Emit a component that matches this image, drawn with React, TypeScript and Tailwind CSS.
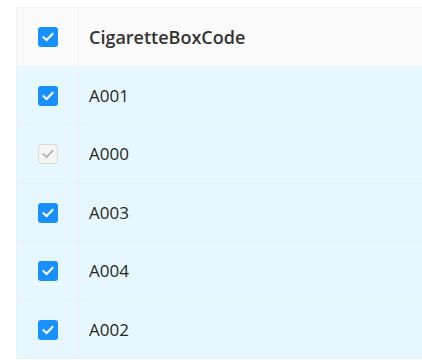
import React from "react";

const rows = [
    { code: "A001", disabled: false, h: "h-[58px]" },
    { code: "A000", disabled: true, h: "h-[59px]" },
    { code: "A003", disabled: false, h: "h-[58px]" },
    { code: "A004", disabled: false, h: "h-[59px]" },
    { code: "A002", disabled: false, h: "h-[58px]" },
];

function Checkbox({ disabled }: { disabled?: boolean }) {
    return (
        <span
            className={
                disabled
                    ? "flex h-5 w-5 items-center justify-center rounded-[3px] border border-[#d9d9d9] bg-[#f5f5f5]"
                    : "flex h-5 w-5 items-center justify-center rounded-[3px] bg-[#1890ff]"
            }
        >
            <svg width="12" height="10" viewBox="0 0 12 10" aria-hidden="true">
                <path
                    d="M1.5 5.2 L4.6 8 L10.5 2"
                    fill="none"
                    stroke={disabled ? "rgba(0,0,0,0.25)" : "#fff"}
                    strokeWidth="2"
                    strokeLinecap="square"
                />
            </svg>
        </span>
    );
}

export default function App() {
    return (
        <div className="min-h-[360px] bg-white pl-4 pt-[7px] font-['Open_Sans',sans-serif] text-[17px] text-[#262626]">
            {/* Table */}
            <div className="border-l border-t border-[#f0f0f0]">
                {/* Header */}
                <div className="flex h-[59px] border-b border-[#f0f0f0] bg-[#fafafa]">
                    <div className="flex w-[62px] shrink-0 items-center justify-center border-r border-[#f0f0f0]">
                        <Checkbox />
                    </div>
                    <div className="flex items-center pl-[10px] text-[18px] font-semibold text-[#333]">CigaretteBoxCode</div>
                </div>

                {/* Rows */}
                {rows.map((row) => (
                    <div key={row.code} className={`flex ${row.h} border-b border-[#f0f0f0] bg-[#e6f7ff]`}>
                        <div className="flex w-[62px] shrink-0 items-center justify-center border-r border-[#f0f0f0]">
                            <Checkbox disabled={row.disabled} />
                        </div>
                        <div className="flex items-center pl-[10px]">{row.code}</div>
                    </div>
                ))}
            </div>
        </div>
    );
}
